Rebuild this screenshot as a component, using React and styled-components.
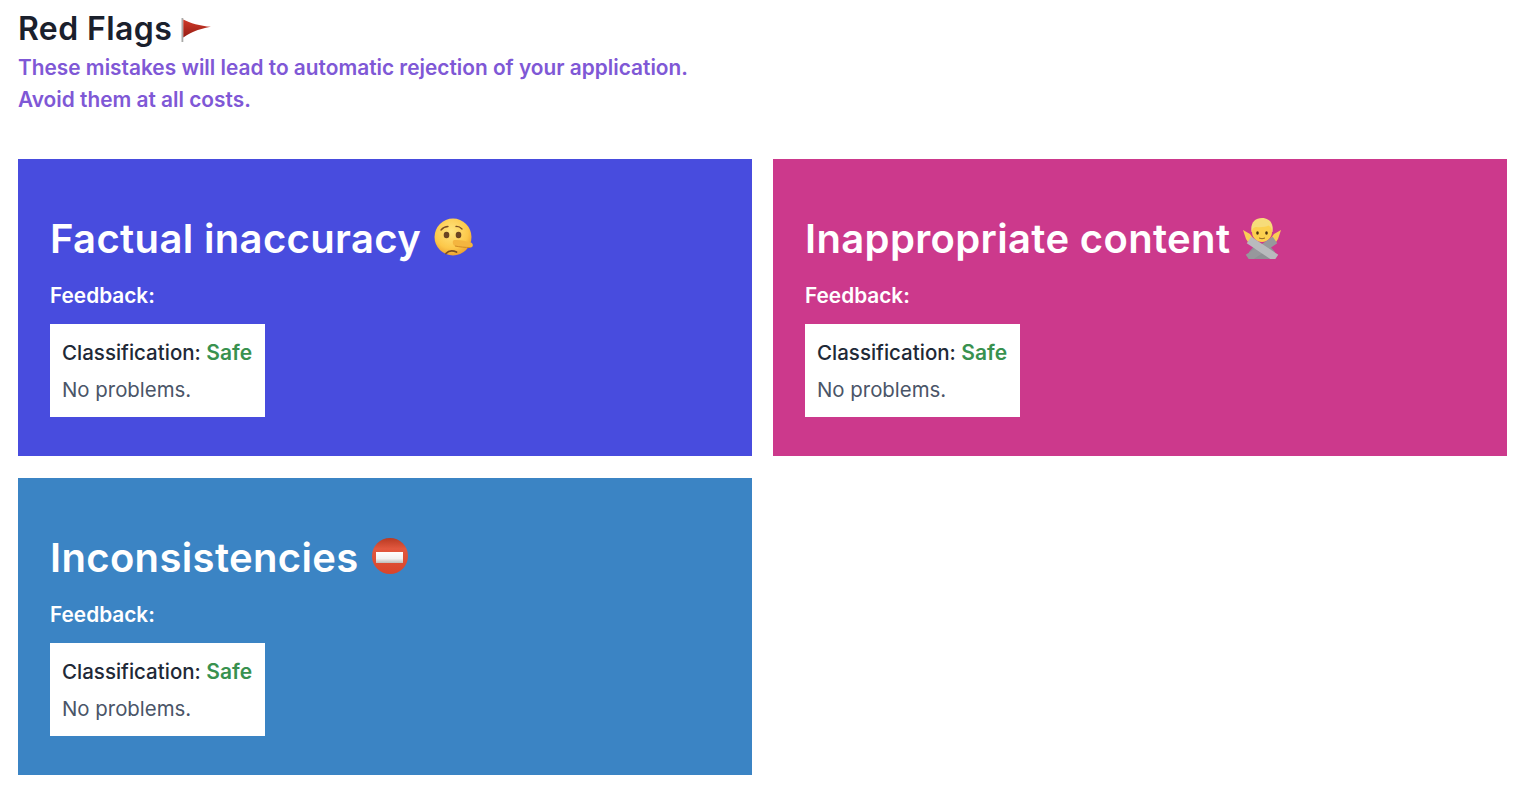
import styled, { createGlobalStyle } from 'styled-components';

const GlobalStyle = createGlobalStyle`
  html, body {
    margin: 0;
    background: #fff;
    font-family: Inter, "Liberation Sans", sans-serif;
  }
`;

const Page = styled.div`
  padding: 10px 27px 0 18px;
`;

const Title = styled.h1`
  display: flex;
  align-items: center;
  gap: 8px;
  margin: 0 0 4px;
  height: 38px;
  font-size: 32px;
  line-height: 38px;
  font-weight: 600;
  letter-spacing: 0.4px;
  color: #1a202c;

  svg {
    margin-top: 2px;
  }
`;

const Subtitle = styled.p`
  margin: 0;
  font-size: 20.85px;
  line-height: 32px;
  font-weight: 600;
  color: #7f58d6;
`;

const Grid = styled.div`
  display: grid;
  grid-template-columns: 734px 734px;
  column-gap: 21px;
  row-gap: 21.5px;
  margin-top: 43px;
`;

const Card = styled.section`
  box-sizing: border-box;
  height: 297px;
  padding: 55px 32px 0;
  background: ${props => props.color};
  color: #fff;
`;

const CardTitle = styled.h2`
  display: flex;
  align-items: center;
  gap: 12px;
  margin: 0;
  height: 50px;
  font-size: 40px;
  line-height: 50px;
  font-weight: 600;
  letter-spacing: 0.35px;

  svg {
    margin-bottom: 4px;
  }
`;

const FeedbackLabel = styled.div`
  margin-top: 19px;
  font-size: 20.8px;
  line-height: 26px;
  font-weight: 600;
`;

const ResultBox = styled.div`
  box-sizing: border-box;
  width: 215px;
  height: 93px;
  margin-top: 15px;
  padding: 13px 12px 0;
  background: #fff;
`;

const Classification = styled.div`
  font-size: 20.5px;
  line-height: 32px;
  font-weight: 500;
  color: #1f2937;
  white-space: nowrap;
`;

const Safe = styled.span`
  font-size: 21px;
  font-weight: 600;
  color: #38914f;
`;

const Note = styled.div`
  margin-top: 5px;
  font-size: 20.4px;
  line-height: 32px;
  color: #4a5568;
`;

const FlagIcon = () => (
  <svg width="32" height="32" viewBox="0 0 32 32">
    <defs>
      <linearGradient id="flag" x1="0" y1="0" x2="0" y2="1">
        <stop offset="0" stopColor="#cf3a28" />
        <stop offset="1" stopColor="#951c14" />
      </linearGradient>
    </defs>
    <rect x="1.5" y="4" width="1.8" height="24" fill="#a9aaa8" />
    <path d="M3.3 5.5C10 9 20 12 31 12.8C24 14 12 17 3.3 23.5Z" fill="url(#flag)" />
  </svg>
);

const LyingIcon = () => (
  <svg width="42" height="42" viewBox="0 0 42 42">
    <defs>
      <radialGradient id="lyingFace" cx="0.45" cy="0.35" r="0.7">
        <stop offset="0" stopColor="#ffe57f" />
        <stop offset="0.65" stopColor="#fcc84a" />
        <stop offset="1" stopColor="#e9982a" />
      </radialGradient>
    </defs>
    <circle cx="20" cy="21" r="18.5" fill="url(#lyingFace)" />
    <path d="M8 14Q11 10.5 15 10.5" fill="none" stroke="#7a4d22" strokeWidth="1.3" strokeLinecap="round" />
    <path d="M23 10.5Q26 10 29 13" fill="none" stroke="#7a4d22" strokeWidth="1.3" strokeLinecap="round" />
    <ellipse cx="13.5" cy="19" rx="2.8" ry="3.3" fill="#6b4522" />
    <ellipse cx="25.5" cy="19" rx="2.8" ry="3.3" fill="#6b4522" />
    <path d="M21 24C27 23.5 33 25 38 26.5C40.5 27.5 40.5 31.5 37.5 31.5C32 31.5 26 31 22 30C19.5 29 19 25 21 24Z" fill="#f4b53f" />
    <path d="M22 30C27 31 32 31.5 37.5 31.5" fill="none" stroke="#d08a25" strokeWidth="1" />
    <path d="M13 37.5Q17 33 23.5 36" fill="none" stroke="#7a4d22" strokeWidth="1.8" strokeLinecap="round" />
  </svg>
);

const NoGestureIcon = () => (
  <svg width="42" height="44" viewBox="0 0 42 44">
    <path d="M1 15L8 19L13 26L8 30L4 24Z" fill="#f9cf54" />
    <path d="M39 15L32 19L27 26L32 30L36 24Z" fill="#f9cf54" />
    <path d="M9.5 17C8 8 13 3 20 3C27 3 32 8 30.5 17Z" fill="#f6dc7a" />
    <path d="M10 17C10 14 11.5 12.5 14 12C19 12.5 24 12 26.5 10.5C29 12 30 14 30 17C30 22.5 25.5 27 20 27C14.5 27 10 22.5 10 17Z" fill="#fbd04f" />
    <ellipse cx="15.5" cy="18" rx="1.3" ry="1.7" fill="#4d3213" />
    <ellipse cx="24.5" cy="18" rx="1.3" ry="1.7" fill="#4d3213" />
    <path d="M17 23Q20 24.5 23 23" fill="none" stroke="#8a5a1d" strokeWidth="0.9" />
    <path d="M7 44L7 37L14 29H26L33 37L33 44Z" fill="#8f9095" />
    <path d="M33 25L6 43" stroke="#97989c" strokeWidth="8" />
    <path d="M7 25L34 43" stroke="#b9babd" strokeWidth="8" />
  </svg>
);

const NoEntryIcon = () => (
  <svg width="38" height="38" viewBox="0 0 38 38">
    <defs>
      <linearGradient id="noEntry" x1="0" y1="0" x2="0" y2="1">
        <stop offset="0" stopColor="#b93a22" />
        <stop offset="0.3" stopColor="#e2583f" />
        <stop offset="1" stopColor="#d9442a" />
      </linearGradient>
      <linearGradient id="noEntryBar" x1="0" y1="0" x2="0" y2="1">
        <stop offset="0" stopColor="#ffffff" />
        <stop offset="0.6" stopColor="#f2f2f2" />
        <stop offset="1" stopColor="#bfbcb8" />
      </linearGradient>
    </defs>
    <circle cx="19" cy="19" r="18" fill="url(#noEntry)" />
    <rect x="5" y="15" width="27" height="11" fill="url(#noEntryBar)" />
  </svg>
);

const categories = [
  { title: 'Factual inaccuracy', color: '#484cde', icon: <LyingIcon /> },
  { title: 'Inappropriate content', color: '#cc398c', icon: <NoGestureIcon /> },
  { title: 'Inconsistencies', color: '#3b84c4', icon: <NoEntryIcon /> },
];

export default function App() {
  return (
    <Page>
      <GlobalStyle />
      <Title>Red Flags <FlagIcon /></Title>
      <Subtitle>These mistakes will lead to automatic rejection of your application.</Subtitle>
      <Subtitle>Avoid them at all costs.</Subtitle>
      <Grid>
        {categories.map(item => (
          <Card key={item.title} color={item.color}>
            <CardTitle>{item.title} {item.icon}</CardTitle>
            <FeedbackLabel>Feedback:</FeedbackLabel>
            <ResultBox>
              <Classification>Classification: <Safe>Safe</Safe></Classification>
              <Note>No problems.</Note>
            </ResultBox>
          </Card>
        ))}
      </Grid>
    </Page>
  );
}
